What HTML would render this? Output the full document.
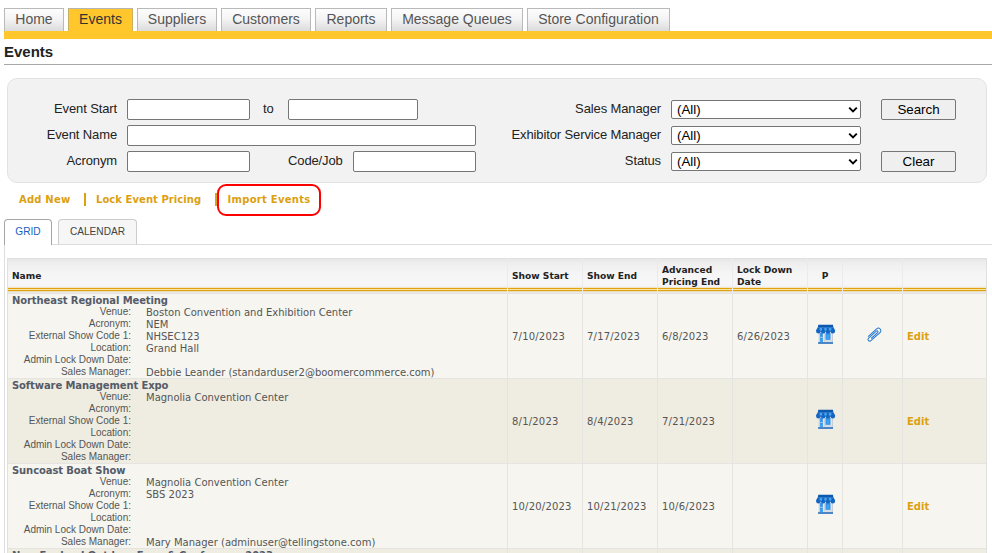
<!DOCTYPE html>
<html lang="en">
<head>
<meta charset="utf-8">
<title>Events</title>
<style>
html,body{margin:0;padding:0;background:#fff;}
body{width:992px;height:553px;overflow:hidden;position:relative;font-family:"Liberation Sans",Arial,sans-serif;color:#222;}
.abs{position:absolute;}
/* top nav tabs */
.nav{position:absolute;left:4px;top:8px;height:23px;white-space:nowrap;}
.nav a{position:absolute;top:0;line-height:20px;box-sizing:border-box;border:1px solid #b9b9b9;border-bottom:none;height:23px;
  background:linear-gradient(#fdfdfd 0,#f4f4f4 45%,#dcdcdc 100%);color:#555;font-size:14px;text-align:center;text-decoration:none;}
.nav a.on{background:#ffc72c;border-color:#b4b4b4 #c9b060 #ffc72c #c9b060;color:#333;}
.ybar{position:absolute;left:4px;top:31px;width:988px;height:8px;background:#ffc72c;}
h1{position:absolute;left:4px;top:43px;margin:0;font-size:15px;font-weight:bold;color:#222;line-height:18px;}
.hr{position:absolute;left:4px;top:64px;width:988px;height:1px;background:#a8a8a8;}
/* search panel */
.panel{position:absolute;left:7px;top:78px;width:980px;height:105px;box-sizing:border-box;border:1px solid #e2e2e2;border-radius:10px;background:#f2f2f2;}
.lbl{position:absolute;font-size:13px;letter-spacing:-0.12px;margin-top:1px;line-height:16px;color:#222;white-space:nowrap;}
.lbl.r{text-align:right;}
.inp{position:absolute;box-sizing:border-box;height:21px;border:1px solid #767676;border-radius:2px;background:#fff;}
.sel{position:absolute;box-sizing:border-box;height:19px;width:190px;border:1px solid #767676;border-radius:2px;background:#fff;font-size:13.33px;line-height:17px;padding-left:5px;color:#000;}
.sel svg{position:absolute;right:2px;top:5px;}
.btn{position:absolute;box-sizing:border-box;width:75px;height:21px;border:1px solid #767676;border-radius:2px;background:#efefef;font-size:13.33px;line-height:19px;text-align:center;color:#000;}
/* action links */
.act{position:absolute;top:193px;font-family:"DejaVu Sans",Verdana,sans-serif;font-weight:bold;font-size:10px;line-height:13px;color:#dca010;white-space:nowrap;letter-spacing:0.06px;}
.sep{position:absolute;top:193px;width:2px;height:13px;background:#dca010;}
.redbox{position:absolute;left:217px;top:184px;width:104px;height:32px;box-sizing:border-box;border:2px solid #f00;border-radius:9px;background:#fff;}
/* grid tabs */
.gtabline{position:absolute;left:4px;top:244px;width:988px;height:1px;background:#ddd;}
.gleft{position:absolute;left:4px;top:244px;width:1px;height:310px;background:#ddd;}
.gtab{position:absolute;top:219px;height:26px;box-sizing:border-box;border:1px solid #ccc;border-bottom:none;border-radius:4px 4px 0 0;font-size:10.15px;line-height:24px;text-align:center;}
.gtab.on{background:#fff;color:#1560c0;height:26px;border-color:#a6a6a6;}
.gtab.off{background:#f6f6f6;color:#444;border-bottom:1px solid #ddd;}
/* grid */
.grid{position:absolute;left:8px;top:258px;width:979px;font-family:"DejaVu Sans",Verdana,sans-serif;font-size:10.5px;color:#555;}

.ghead{position:absolute;left:7px;top:258px;width:980px;height:30px;background:linear-gradient(#e7e7e7 0,#eeeeee 14%,#f5f5f5 50%,#f7f7f7 86%,#f0f0f0 100%);border-top:1px solid #e0e0e0;box-sizing:border-box;}
.gold1{position:absolute;left:7px;top:287px;width:980px;height:7px;background:linear-gradient(#f3e6c4 0,#f3e6c4 1px,#e0a30c 1px,#e0a30c 2px,#f6e3ae 2px,#f6e3ae 3px,#e0a30c 3px,#e0a30c 4px,#eadcb8 4px,#eadcb8 5px,#e9e9e7 5px,#e9e9e7 6px,#f0efeb 6px,#f0efeb 7px);}
.th{position:absolute;top:269.5px;font-family:"DejaVu Sans",Verdana,sans-serif;font-weight:bold;font-size:9.1px;line-height:12px;color:#222;white-space:nowrap;}
.th.two{top:264px;}
.row{position:absolute;left:8px;width:979px;height:85px;box-sizing:border-box;border-top:1px solid #e5e4e0;font-family:"DejaVu Sans",Verdana,sans-serif;font-size:10px;line-height:12px;color:#555;}
.row.odd{background:#f6f5f0;}
.row.even{background:#efece1;}
.ttl{position:absolute;left:4px;top:1px;font-weight:bold;color:#555b68;white-space:nowrap;letter-spacing:-0.1px;}
.fl{position:absolute;left:0;width:123px;margin-top:-1px;text-align:right;font-family:"Liberation Sans",Arial,sans-serif;font-size:10px;white-space:nowrap;color:#555;}
.fv{position:absolute;left:138px;white-space:nowrap;color:#555;}
.dt{position:absolute;top:37px;white-space:nowrap;color:#555;letter-spacing:0.2px;}
.store{position:absolute;left:807px;top:30px;}
.clip{position:absolute;left:858px;top:32px;}
.edit{position:absolute;left:899px;top:37px;font-weight:bold;color:#dca010;}
.vl{position:absolute;top:258px;width:1px;height:295px;background:linear-gradient(#ebebeb 0,#ebebeb 35px,#e5e4e0 35px);}
.vb{position:absolute;top:258px;width:1px;height:295px;background:#e0e0dc;}
</style>
</head>
<body>
<div class="nav">
  <a style="left:0;width:60px">Home</a>
  <a class="on" style="left:64px;width:65px">Events</a>
  <a style="left:133px;width:80px">Suppliers</a>
  <a style="left:217px;width:90px">Customers</a>
  <a style="left:311px;width:72px">Reports</a>
  <a style="left:387px;width:132px">Message Queues</a>
  <a style="left:523px;width:143px">Store Configuration</a>
</div>
<div class="ybar"></div>
<h1>Events</h1>
<div class="hr"></div>

<div class="panel"></div>
<div class="lbl r" style="left:17px;width:100px;top:100px">Event Start</div>
<div class="inp" style="left:127px;top:99px;width:123px"></div>
<div class="lbl" style="left:263px;top:100px">to</div>
<div class="inp" style="left:288px;top:99px;width:130px"></div>
<div class="lbl r" style="left:17px;width:100px;top:126px">Event Name</div>
<div class="inp" style="left:127px;top:125px;width:349px"></div>
<div class="lbl r" style="left:17px;width:100px;top:152px">Acronym</div>
<div class="inp" style="left:127px;top:151px;width:123px"></div>
<div class="lbl" style="left:288px;top:152px">Code/Job</div>
<div class="inp" style="left:353px;top:151px;width:123px"></div>

<div class="lbl r" style="left:461px;width:200px;top:100px">Sales Manager</div>
<div class="sel" style="left:671px;top:100px">(All)<svg width="10" height="8" viewBox="0 0 10 8"><path d="M1.2 1.6 L5 5.4 L8.8 1.6" fill="none" stroke="#000" stroke-width="1.9"/></svg></div>
<div class="lbl r" style="left:461px;width:200px;top:126px">Exhibitor Service Manager</div>
<div class="sel" style="left:671px;top:126px">(All)<svg width="10" height="8" viewBox="0 0 10 8"><path d="M1.2 1.6 L5 5.4 L8.8 1.6" fill="none" stroke="#000" stroke-width="1.9"/></svg></div>
<div class="lbl r" style="left:461px;width:200px;top:152px">Status</div>
<div class="sel" style="left:671px;top:152px">(All)<svg width="10" height="8" viewBox="0 0 10 8"><path d="M1.2 1.6 L5 5.4 L8.8 1.6" fill="none" stroke="#000" stroke-width="1.9"/></svg></div>
<div class="btn" style="left:881px;top:99px">Search</div>
<div class="btn" style="left:881px;top:151px">Clear</div>

<div class="act" style="left:19px;letter-spacing:0.2px">Add New</div>
<div class="sep" style="left:84px"></div>
<div class="act" style="left:96px">Lock Event Pricing</div>
<div class="sep" style="left:215px"></div>
<div class="redbox"></div>
<div class="act" style="left:227.5px;letter-spacing:0.28px">Import Events</div>

<div class="gtabline"></div>
<div class="gleft"></div>
<div class="gtab on" style="left:4px;width:48px">GRID</div>
<div class="gtab off" style="left:58px;width:79px">CALENDAR</div>

<!--GRID-->
<div class="ghead"></div><div class="gold1"></div>
<div class="th" style="left:12px">Name</div>
<div class="th" style="left:512px">Show Start</div>
<div class="th" style="left:587px">Show End</div>
<div class="th two" style="left:662px">Advanced<br>Pricing End</div>
<div class="th two" style="left:737px">Lock Down<br>Date</div>
<div class="th" style="left:808px;width:34px;text-align:center">P</div>
<div class="row odd" style="top:293px">
<div class="ttl">Northeast Regional Meeting</div>
<div class="fl" style="top:13px">Venue:</div><div class="fv" style="top:13px">Boston Convention and Exhibition Center</div>
<div class="fl" style="top:25px">Acronym:</div><div class="fv" style="top:25px">NEM</div>
<div class="fl" style="top:37px">External Show Code 1:</div><div class="fv" style="top:37px">NHSEC123</div>
<div class="fl" style="top:49px">Location:</div><div class="fv" style="top:49px">Grand Hall</div>
<div class="fl" style="top:61px">Admin Lock Down Date:</div>
<div class="fl" style="top:73px">Sales Manager:</div><div class="fv" style="top:73px">Debbie Leander (standarduser2@boomercommerce.com)</div>
<div class="dt" style="left:504px">7/10/2023</div>
<div class="dt" style="left:579px">7/17/2023</div>
<div class="dt" style="left:654px">6/8/2023</div>
<div class="dt" style="left:729px">6/26/2023</div>
<svg class="store" width="21" height="21" viewBox="0 0 21 21">
  <rect x="3.8" y="9" width="14" height="9.4" fill="#e6ebf1"/>
  <rect x="3.8" y="9" width="0.9" height="9" fill="#bcc6d2"/>
  <rect x="16.9" y="9" width="0.9" height="9" fill="#bcc6d2"/>
  <rect x="3.1" y="18" width="14.9" height="2" fill="#4a86c8"/>
  <rect x="5.1" y="9" width="2.7" height="9" fill="#2f8fe6"/>
  <rect x="5.1" y="15.2" width="2.7" height="2.6" fill="#3ea6f4"/>
  <rect x="5.3" y="12.9" width="2.3" height="1" fill="#a9d3f5"/>
  <rect x="10.5" y="9" width="5" height="6.8" fill="#2f8fe6"/>
  <rect x="11.6" y="10.6" width="2.8" height="4.4" fill="#3fa2f0"/>
  <rect x="8.9" y="9" width="0.9" height="8.4" fill="#c3ccd6"/>
  <rect x="8.9" y="16.5" width="8" height="0.9" fill="#c3ccd6"/>
  <path d="M3.3 0.8h14.6l0.5 2.6h-15.6z" fill="#0c5ab0"/>
  <path d="M2.8 3.2h15.6l1.7 3.1v0.9a2.38 2.2 0 0 1-4.76 0a2.38 2.2 0 0 1-4.76 0a2.38 2.2 0 0 1-4.76 0a2.38 2.2 0 0 1-4.76 0v-0.9z" fill="#1466c2"/>
  <rect x="4.6" y="3.7" width="2.6" height="3" rx="1.1" fill="#49a5ee"/>
  <rect x="9.2" y="3.7" width="2.6" height="3" rx="1.1" fill="#49a5ee"/>
  <rect x="13.8" y="3.7" width="2.6" height="3" rx="1.1" fill="#49a5ee"/>
</svg>
<svg class="clip" width="17" height="18" viewBox="0 0 17 18">
  <g transform="translate(8.25 8.35) rotate(-42) translate(-8.7 -2.5)">
  <path d="M3 0 H14.2 A2.5 2.5 0 0 1 14.2 5 H2 A1.75 1.75 0 0 1 2 1.5 H12.4 A1 1 0 0 1 12.4 3.5 H4" fill="none" stroke="#2b7bd2" stroke-width="1.05" stroke-linecap="round"/>
  </g>
</svg>
<div class="edit">Edit</div>
</div>
<div class="row even" style="top:378px">
<div class="ttl">Software Management Expo</div>
<div class="fl" style="top:13px">Venue:</div><div class="fv" style="top:13px">Magnolia Convention Center</div>
<div class="fl" style="top:25px">Acronym:</div>
<div class="fl" style="top:37px">External Show Code 1:</div>
<div class="fl" style="top:49px">Location:</div>
<div class="fl" style="top:61px">Admin Lock Down Date:</div>
<div class="fl" style="top:73px">Sales Manager:</div>
<div class="dt" style="left:504px">8/1/2023</div>
<div class="dt" style="left:579px">8/4/2023</div>
<div class="dt" style="left:654px">7/21/2023</div>
<svg class="store" width="21" height="21" viewBox="0 0 21 21">
  <rect x="3.8" y="9" width="14" height="9.4" fill="#e6ebf1"/>
  <rect x="3.8" y="9" width="0.9" height="9" fill="#bcc6d2"/>
  <rect x="16.9" y="9" width="0.9" height="9" fill="#bcc6d2"/>
  <rect x="3.1" y="18" width="14.9" height="2" fill="#4a86c8"/>
  <rect x="5.1" y="9" width="2.7" height="9" fill="#2f8fe6"/>
  <rect x="5.1" y="15.2" width="2.7" height="2.6" fill="#3ea6f4"/>
  <rect x="5.3" y="12.9" width="2.3" height="1" fill="#a9d3f5"/>
  <rect x="10.5" y="9" width="5" height="6.8" fill="#2f8fe6"/>
  <rect x="11.6" y="10.6" width="2.8" height="4.4" fill="#3fa2f0"/>
  <rect x="8.9" y="9" width="0.9" height="8.4" fill="#c3ccd6"/>
  <rect x="8.9" y="16.5" width="8" height="0.9" fill="#c3ccd6"/>
  <path d="M3.3 0.8h14.6l0.5 2.6h-15.6z" fill="#0c5ab0"/>
  <path d="M2.8 3.2h15.6l1.7 3.1v0.9a2.38 2.2 0 0 1-4.76 0a2.38 2.2 0 0 1-4.76 0a2.38 2.2 0 0 1-4.76 0a2.38 2.2 0 0 1-4.76 0v-0.9z" fill="#1466c2"/>
  <rect x="4.6" y="3.7" width="2.6" height="3" rx="1.1" fill="#49a5ee"/>
  <rect x="9.2" y="3.7" width="2.6" height="3" rx="1.1" fill="#49a5ee"/>
  <rect x="13.8" y="3.7" width="2.6" height="3" rx="1.1" fill="#49a5ee"/>
</svg>
<div class="edit">Edit</div>
</div>
<div class="row odd" style="top:463px">
<div class="ttl">Suncoast Boat Show</div>
<div class="fl" style="top:13px">Venue:</div><div class="fv" style="top:13px">Magnolia Convention Center</div>
<div class="fl" style="top:25px">Acronym:</div><div class="fv" style="top:25px">SBS 2023</div>
<div class="fl" style="top:37px">External Show Code 1:</div>
<div class="fl" style="top:49px">Location:</div>
<div class="fl" style="top:61px">Admin Lock Down Date:</div>
<div class="fl" style="top:73px">Sales Manager:</div><div class="fv" style="top:73px">Mary Manager (adminuser@tellingstone.com)</div>
<div class="dt" style="left:504px">10/20/2023</div>
<div class="dt" style="left:579px">10/21/2023</div>
<div class="dt" style="left:654px">10/6/2023</div>
<svg class="store" width="21" height="21" viewBox="0 0 21 21">
  <rect x="3.8" y="9" width="14" height="9.4" fill="#e6ebf1"/>
  <rect x="3.8" y="9" width="0.9" height="9" fill="#bcc6d2"/>
  <rect x="16.9" y="9" width="0.9" height="9" fill="#bcc6d2"/>
  <rect x="3.1" y="18" width="14.9" height="2" fill="#4a86c8"/>
  <rect x="5.1" y="9" width="2.7" height="9" fill="#2f8fe6"/>
  <rect x="5.1" y="15.2" width="2.7" height="2.6" fill="#3ea6f4"/>
  <rect x="5.3" y="12.9" width="2.3" height="1" fill="#a9d3f5"/>
  <rect x="10.5" y="9" width="5" height="6.8" fill="#2f8fe6"/>
  <rect x="11.6" y="10.6" width="2.8" height="4.4" fill="#3fa2f0"/>
  <rect x="8.9" y="9" width="0.9" height="8.4" fill="#c3ccd6"/>
  <rect x="8.9" y="16.5" width="8" height="0.9" fill="#c3ccd6"/>
  <path d="M3.3 0.8h14.6l0.5 2.6h-15.6z" fill="#0c5ab0"/>
  <path d="M2.8 3.2h15.6l1.7 3.1v0.9a2.38 2.2 0 0 1-4.76 0a2.38 2.2 0 0 1-4.76 0a2.38 2.2 0 0 1-4.76 0a2.38 2.2 0 0 1-4.76 0v-0.9z" fill="#1466c2"/>
  <rect x="4.6" y="3.7" width="2.6" height="3" rx="1.1" fill="#49a5ee"/>
  <rect x="9.2" y="3.7" width="2.6" height="3" rx="1.1" fill="#49a5ee"/>
  <rect x="13.8" y="3.7" width="2.6" height="3" rx="1.1" fill="#49a5ee"/>
</svg>
<div class="edit">Edit</div>
</div>
<div class="row even" style="top:548px">
<div class="ttl">New England Outdoor Expo &amp; Conference 2023</div>
<div class="fl" style="top:13px">Venue:</div><div class="fv" style="top:13px">Boston Convention and Exhibition Center</div>
<div class="fl" style="top:25px">Acronym:</div><div class="fv" style="top:25px">NEOE</div>
<div class="fl" style="top:37px">External Show Code 1:</div>
<div class="fl" style="top:49px">Location:</div>
<div class="fl" style="top:61px">Admin Lock Down Date:</div>
<div class="fl" style="top:73px">Sales Manager:</div>
<div class="dt" style="left:504px">11/3/2023</div>
<div class="dt" style="left:579px">11/5/2023</div>
<div class="dt" style="left:654px">10/20/2023</div>
<svg class="store" width="21" height="21" viewBox="0 0 21 21">
  <rect x="3.8" y="9" width="14" height="9.4" fill="#e6ebf1"/>
  <rect x="3.8" y="9" width="0.9" height="9" fill="#bcc6d2"/>
  <rect x="16.9" y="9" width="0.9" height="9" fill="#bcc6d2"/>
  <rect x="3.1" y="18" width="14.9" height="2" fill="#4a86c8"/>
  <rect x="5.1" y="9" width="2.7" height="9" fill="#2f8fe6"/>
  <rect x="5.1" y="15.2" width="2.7" height="2.6" fill="#3ea6f4"/>
  <rect x="5.3" y="12.9" width="2.3" height="1" fill="#a9d3f5"/>
  <rect x="10.5" y="9" width="5" height="6.8" fill="#2f8fe6"/>
  <rect x="11.6" y="10.6" width="2.8" height="4.4" fill="#3fa2f0"/>
  <rect x="8.9" y="9" width="0.9" height="8.4" fill="#c3ccd6"/>
  <rect x="8.9" y="16.5" width="8" height="0.9" fill="#c3ccd6"/>
  <path d="M3.3 0.8h14.6l0.5 2.6h-15.6z" fill="#0c5ab0"/>
  <path d="M2.8 3.2h15.6l1.7 3.1v0.9a2.38 2.2 0 0 1-4.76 0a2.38 2.2 0 0 1-4.76 0a2.38 2.2 0 0 1-4.76 0a2.38 2.2 0 0 1-4.76 0v-0.9z" fill="#1466c2"/>
  <rect x="4.6" y="3.7" width="2.6" height="3" rx="1.1" fill="#49a5ee"/>
  <rect x="9.2" y="3.7" width="2.6" height="3" rx="1.1" fill="#49a5ee"/>
  <rect x="13.8" y="3.7" width="2.6" height="3" rx="1.1" fill="#49a5ee"/>
</svg>
<div class="edit">Edit</div>
</div>
<div class="vb" style="left:7px"></div><div class="vb" style="left:986px"></div>
<div class="vl" style="left:507px"></div>
<div class="vl" style="left:582px"></div>
<div class="vl" style="left:657px"></div>
<div class="vl" style="left:732px"></div>
<div class="vl" style="left:807px"></div>
<div class="vl" style="left:842px"></div>
<div class="vl" style="left:902px"></div>
<!--/GRID-->
</body>
</html>
